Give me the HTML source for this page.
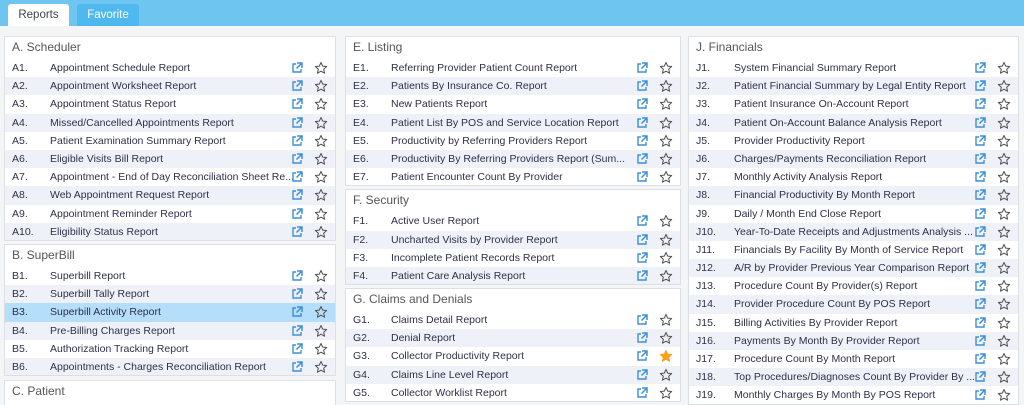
<!DOCTYPE html>
<html><head><meta charset="utf-8"><style>
*{box-sizing:border-box;margin:0;padding:0}
html,body{width:1024px;height:405px;overflow:hidden}
body{background:#f4f5f6;font-family:"Liberation Sans",sans-serif;position:relative}
.tabs{position:absolute;left:0;top:0;width:1024px;height:26px;background:#6ec6f0}
.tab{position:absolute;top:4px;height:22px;border-radius:3px 3px 0 0;font-size:11.5px;line-height:22px;text-align:center}
.t1{left:8px;width:61px;background:#fff;color:#444}
.t2{left:77px;width:62px;background:#4fb8ef;color:#fff}
.p{position:absolute;background:#fff;border:1px solid #dcdfe3;overflow:hidden}
.h{height:22px;line-height:21px;padding-left:7px;font-size:12px;color:#555}
.r{height:18.2px;line-height:18.2px;font-size:10.5px;color:#2f2f48;position:relative;white-space:nowrap}
.r:nth-child(even){background:#eef2f8}
.r.sel{background:#b5defb}
.c{position:absolute;left:7px}
.n{position:absolute;left:45px}
.i{position:absolute;top:3px}
</style></head><body>
<div class="tabs"><div class="tab t1">Reports</div><div class="tab t2">Favorite</div></div>
<div id="root"></div>
<script>
const lk='<svg width="12" height="12" viewBox="0 0 12 12"><path d="M5 2H2v8h8V7" fill="none" stroke="#3d8fd8" stroke-width="1.4"/><path d="M6 1h5v5M11 1L5.5 6.5" fill="none" stroke="#3d8fd8" stroke-width="1.5"/></svg>';
function st(f){return '<svg width="14" height="14" viewBox="0 0 24 24"><path d="M12 2.5l2.9 6.3 6.8.7-5.1 4.6 1.5 6.8L12 17.4 5.9 20.9l1.5-6.8L2.3 9.5l6.8-.7z" fill="'+(f?'#f7a21b':'none')+'" stroke="'+(f?'#f7a21b':'#555')+'" stroke-width="1.8" stroke-linejoin="round"/></svg>';}
const P=[
[4,36,332,"A. Scheduler","A",["Appointment Schedule Report","Appointment Worksheet Report","Appointment Status Report","Missed/Cancelled Appointments Report","Patient Examination Summary Report","Eligible Visits Bill Report","Appointment - End of Day Reconciliation Sheet Re...","Web Appointment Request Report","Appointment Reminder Report","Eligibility Status Report"]],
[4,244,332,"B. SuperBill","B",["Superbill Report","Superbill Tally Report","Superbill Activity Report","Pre-Billing Charges Report","Authorization Tracking Report","Appointments - Charges Reconciliation Report"]],
[4,380,332,"C. Patient","C",[]],
[345,36,336,"E. Listing","E",["Referring Provider Patient Count Report","Patients By Insurance Co. Report","New Patients Report","Patient List By POS and Service Location Report","Productivity by Referring Providers Report","Productivity By Referring Providers Report (Sum...","Patient Encounter Count By Provider"]],
[345,189.4,336,"F. Security","F",["Active User Report","Uncharted Visits by Provider Report","Incomplete Patient Records Report","Patient Care Analysis Report"]],
[345,288,336,"G. Claims and Denials","G",["Claims Detail Report","Denial Report","Collector Productivity Report","Claims Line Level Report","Collector Worklist Report"]],
[688,36,331,"J. Financials","J",["System Financial Summary Report","Patient Financial Summary by Legal Entity Report","Patient Insurance On-Account Report","Patient On-Account Balance Analysis Report","Provider Productivity Report","Charges/Payments Reconciliation Report","Monthly Activity Analysis Report","Financial Productivity By Month Report","Daily / Month End Close Report","Year-To-Date Receipts and Adjustments Analysis ...","Financials By Facility By Month of Service Report","A/R by Provider Previous Year Comparison Report","Procedure Count By Provider(s) Report","Provider Procedure Count By POS Report","Billing Activities By Provider Report","Payments By Month By Provider Report","Procedure Count By Month Report","Top Procedures/Diagnoses Count By Provider By ...","Monthly Charges By Month By POS Report"]]
];
let h='';
for(const [x,y,w,t,L,rows] of P){
 let ht=rows.length?22+rows.length*18.2+1:40;
 if(y+ht>405) ht=Math.max(10,405-y+2);
 h+=`<div class="p" style="left:${x}px;top:${y}px;width:${w}px;height:${ht}px"><div class="h">${t}</div><div>`;
 rows.forEach((n,i)=>{
  const sel=(L=='B'&&i==2)?' sel':'';
  const fav=(L=='G'&&i==2);
  h+=`<div class="r${sel}"><span class="c">${L}${i+1}.</span><span class="n">${n}</span><span class="i" style="left:${w-46}px">${lk}</span><span class="i" style="left:${w-23}px;top:2px">${st(fav)}</span></div>`;
 });
 h+='</div></div>';
}
document.getElementById('root').innerHTML=h;
</script>
</body></html>
